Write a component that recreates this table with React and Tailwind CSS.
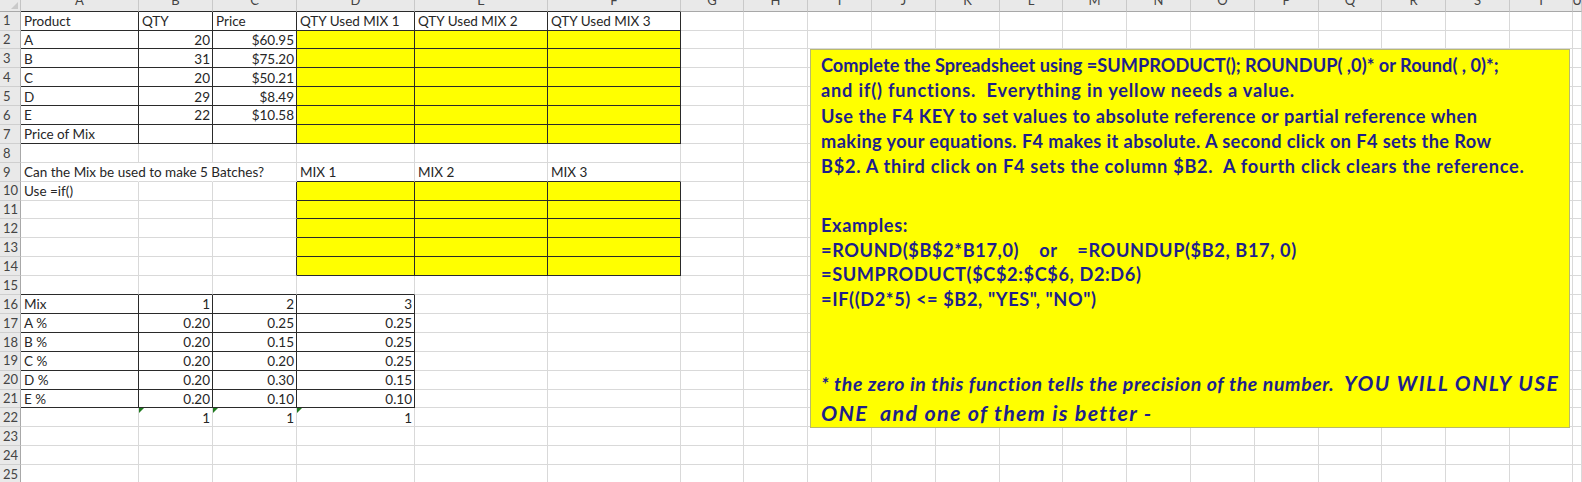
import React from 'react'

const LETTERS = 'ABCDEFGHIJKLMNOPQRSTU'.split('')
const ROWS = 25

// r() marks a right-aligned (numeric) cell
const r = (t) => ({ t, right: true })

const CELLS = {
  '1-1': 'Product', '1-2': 'QTY', '1-3': 'Price', '1-4': 'QTY Used MIX 1', '1-5': 'QTY Used MIX 2', '1-6': 'QTY Used MIX 3',
  '2-1': 'A', '2-2': r('20'), '2-3': r('$60.95'),
  '3-1': 'B', '3-2': r('31'), '3-3': r('$75.20'),
  '4-1': 'C', '4-2': r('20'), '4-3': r('$50.21'),
  '5-1': 'D', '5-2': r('29'), '5-3': r('$8.49'),
  '6-1': 'E', '6-2': r('22'), '6-3': r('$10.58'),
  '7-1': 'Price of Mix',
  '9-1': 'Can the Mix be used to make 5 Batches?', '9-4': 'MIX 1', '9-5': 'MIX 2', '9-6': 'MIX 3',
  '10-1': 'Use =if()',
  '16-1': 'Mix', '16-2': r('1'), '16-3': r('2'), '16-4': r('3'),
  '17-1': 'A %', '17-2': r('0.20'), '17-3': r('0.25'), '17-4': r('0.25'),
  '18-1': 'B %', '18-2': r('0.20'), '18-3': r('0.15'), '18-4': r('0.25'),
  '19-1': 'C %', '19-2': r('0.20'), '19-3': r('0.20'), '19-4': r('0.25'),
  '20-1': 'D %', '20-2': r('0.20'), '20-3': r('0.30'), '20-4': r('0.15'),
  '21-1': 'E %', '21-2': r('0.20'), '21-3': r('0.10'), '21-4': r('0.10'),
  '22-2': r('1'), '22-3': r('1'), '22-4': r('1'),
}

const inTable = (row, c) =>
  (row >= 1 && row <= 7 && c >= 1 && c <= 6) ||
  (row >= 10 && row <= 14 && c >= 4 && c <= 6) ||
  (row >= 16 && row <= 21 && c >= 1 && c <= 4)

const isYellow = (row, c) => c >= 4 && c <= 6 && ((row >= 2 && row <= 7) || (row >= 10 && row <= 14))

const hasFlag = (row, c) => row === 22 && c >= 2 && c <= 4

function Cell({ row, c }) {
  const v = CELLS[`${row}-${c}`]
  const text = typeof v === 'object' ? v.t : v
  const right = typeof v === 'object'
  const darkR = inTable(row, c) || inTable(row, c + 1)
  const darkB = inTable(row, c) || inTable(row + 1, c)
  const hideR = row === 9 && (c === 1 || c === 2)
  const rb = darkR ? 'border-r-[#2a2a2a]' : hideR ? 'border-r-transparent' : 'border-r-[#d9d9d9]'
  const bb = darkB ? 'border-b-[#2a2a2a]' : 'border-b-[#d9d9d9]'
  const bg = isYellow(row, c) ? 'bg-[#ffff00]' : ''
  return (
    <div className={`relative flex items-center border-r border-b ${rb} ${bb} ${bg} ${right ? 'justify-end pr-[2px]' : 'pl-[3px]'}`}>
      {hasFlag(row, c) && (
        <div className="absolute left-0 top-0 w-0 h-0 border-t-[5px] border-t-[#1f7a1f] border-r-[5px] border-r-transparent" />
      )}
      {text && <span className="whitespace-nowrap pt-[1px]">{text}</span>}
    </div>
  )
}

export default function App() {
  const rows = Array.from({ length: ROWS }, (_, i) => i + 1)
  return (
    <div className="relative w-[1582px] h-[482px] overflow-hidden bg-white text-[#262626] text-[13.5px] [font-family:Lato,'Liberation_Sans',sans-serif]">
      <div className="grid grid-cols-[21px_118px_74px_84px_118px_133px_133px_63px_64px_64px_64px_64px_63px_64px_64px_64px_64px_63px_64px_64px_63px_1fr] grid-rows-[11.7px_repeat(25,18.9px)]">
        {/* corner */}
        <div className="flex items-end justify-end pr-[2px] pb-[2px] bg-[#e9e9e9] border-r border-b border-r-[#c4c4c4] border-b-[#a8a8a8]">
          <div className="w-0 h-0 border-b-[7px] border-b-[#c9c9c9] border-l-[7px] border-l-transparent" />
        </div>
        {/* column letters, cut off at the top */}
        {LETTERS.map((l, i) => (
          <div key={l} className={`flex items-end justify-center overflow-hidden bg-[#e9e9e9] border-r border-b border-r-[#c9c9c9] ${inTable(1, i + 1) ? 'border-b-[#2a2a2a]' : 'border-b-[#a8a8a8]'}`}>
            <span className="text-[13px] leading-none text-[#444] mb-[4px]">{l}</span>
          </div>
        ))}
        {rows.map(row => (
          <React.Fragment key={row}>
            <div className="flex items-center pl-[3px] bg-[#e9e9e9] border-r border-b border-r-[#a8a8a8] border-b-[#cfcfcf] text-[13px] text-[#444] pt-[1px]">
              {row}
            </div>
            {LETTERS.map((l, i) => (
              <Cell key={l} row={row} c={i + 1} />
            ))}
          </React.Fragment>
        ))}
      </div>

      {/* instructions text box lying over the sheet */}
      <div className="absolute left-[810px] top-[49px] w-[760px] h-[379px] bg-[#ffff00] border border-[#b9b96a] pl-[10px] pt-[3px] text-[#1e1e8c] font-bold whitespace-pre">
        <div className="text-[18.2px] leading-[25.3px]">
          <div>Complete the Spreadsheet using =SUMPRODUCT(); ROUNDUP( ,0)* or Round( , 0)*;</div>
          <div className="tracking-[0.8px]">and if() functions.  Everything in yellow needs a value.</div>
          <div className="tracking-[0.55px]">Use the F4 KEY to set values to absolute reference or partial reference when</div>
          <div className="tracking-[0.4px]">making your equations. F4 makes it absolute. A second click on F4 sets the Row</div>
          <div className="tracking-[0.7px]">B$2. A third click on F4 sets the column $B2.  A fourth click clears the reference.</div>
        </div>
        <div className="mt-[34px] text-[18.2px] leading-[24.4px] tracking-[0.6px]">
          <div>Examples:</div>
          <div>=ROUND($B$2*B17,0)    or    =ROUNDUP($B2, B17, 0)</div>
          <div>=SUMPRODUCT($C$2:$C$6, D2:D6)</div>
          <div>=IF((D2*5) &lt;= $B2, "YES", "NO")</div>
        </div>
        <div className="mt-[58px] italic leading-[27px]">
          <div><span className="text-[19.5px] tracking-[0.6px]">* the zero in this function tells the precision of the number.  </span><span className="text-[21px] tracking-[1.5px]">YOU WILL ONLY USE</span></div>
          <div className="text-[21.5px] tracking-[1.3px]">ONE  and one of them is better -</div>
        </div>
      </div>
    </div>
  )
}
